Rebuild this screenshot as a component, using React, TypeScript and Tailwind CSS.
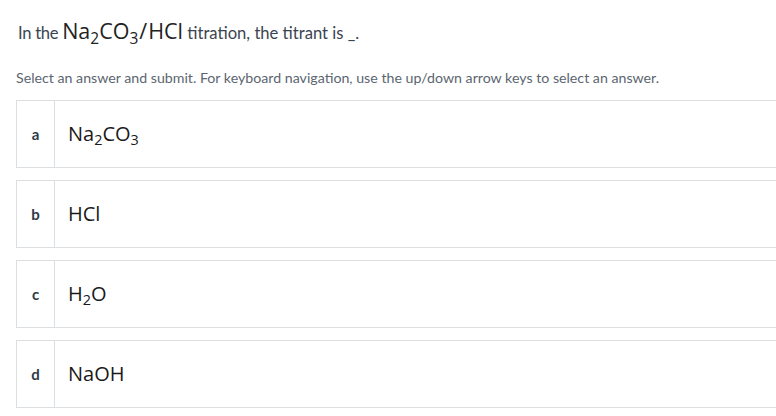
import React from "react";

const Sub = ({ children }: { children: React.ReactNode }) => (
  <sub className="text-[0.72em] leading-none bottom-[-0.3em]">{children}</sub>
);

const options: { k: string; v: React.ReactNode }[] = [
  { k: "a", v: <>Na<Sub>2</Sub>CO<Sub>3</Sub></> },
  { k: "b", v: <>HCl</> },
  { k: "c", v: <>H<Sub>2</Sub>O</> },
  { k: "d", v: <>NaOH</> },
];

export default function App() {
  return (
    <div className="w-[776px] h-[416px] overflow-hidden bg-white font-['Lato',sans-serif]">
      <div className="pl-[18px] pt-[16px] h-[29px] text-[16.6px] text-[#3a4550] leading-[29px] flex items-baseline">
        <span className="tracking-[-0.3px]">In the&nbsp;</span>
        <span className="font-['Open_Sans',sans-serif] text-[21.5px] text-[#222]">
          Na<Sub>2</Sub>CO<Sub>3</Sub>
          <span className="px-[1px]">/</span>HCl
        </span>
        <span>&nbsp;titration, the titrant is _.</span>
      </div>
      <div className="pl-[16px] mt-[40px] text-[14.2px] text-[#5b6670] leading-[18px]">
        Select an answer and submit. For keyboard navigation, use the up/down arrow keys to select an answer.
      </div>
      <div className="ml-[16px] mt-[13px] flex flex-col gap-[12px]">
        {options.map((o) => (
          <div key={o.k} className="h-[68px] border border-r-0 border-[#dcdfe2] flex">
            <div className="w-[38px] border-r border-[#dcdfe2] flex items-center justify-center text-[15px] font-bold text-[#2e3b48]">
              {o.k}
            </div>
            <div className="pl-[13px] flex items-center font-['Open_Sans',sans-serif] text-[20px] text-[#1a1a1a]">
              <span>{o.v}</span>
            </div>
          </div>
        ))}
      </div>
    </div>
  );
}
